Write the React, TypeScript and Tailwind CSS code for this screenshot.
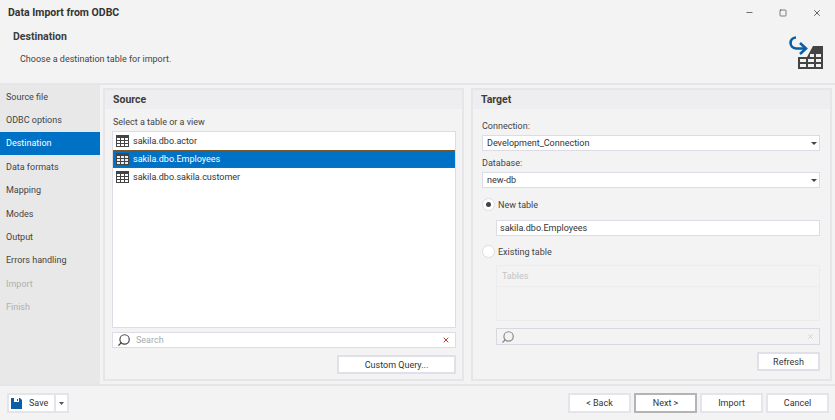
import { Search, X, Minus, Square } from "lucide-react";

const steps = [
  { label: "Source file" },
  { label: "ODBC options" },
  { label: "Destination", active: true },
  { label: "Data formats" },
  { label: "Mapping" },
  { label: "Modes" },
  { label: "Output" },
  { label: "Errors handling" },
  { label: "Import", disabled: true },
  { label: "Finish", disabled: true },
];

function TableIcon({ selected }: { selected?: boolean }) {
  return (
    <svg width="13" height="13" viewBox="0 0 13 13" className="shrink-0">
      <rect x="0.5" y="0.5" width="12" height="11" fill={selected ? "#e8eef4" : "#fff"} stroke="#444" />
      <rect x="0" y="0" width="13" height="3" fill="#444" />
      <path d="M4.5 3v8M8.5 3v8M1 5.5h11M1 8.5h11" stroke="#444" strokeWidth="1" />
    </svg>
  );
}

function Combo({ value }: { value: string }) {
  return (
    <div className="flex h-[16px] items-center justify-between border border-[#dcdce6] bg-white pl-[4px] pr-[1px] text-[#333]">
      <span>{value}</span>
      <svg width="6" height="3" viewBox="0 0 6 3" className="mr-[1px]">
        <path d="M0 0h6L3 3z" fill="#444" />
      </svg>
    </div>
  );
}

function Panel({ title, children }: { title: string; children: React.ReactNode }) {
  return (
    <section className="flex w-[361px] shrink-0 flex-col border-2 border-[#e6e6ea] bg-[#f3f3f3]">
      <h2 className="flex h-[19px] shrink-0 items-center bg-[#eeeef0] pl-[8px] text-[10.5px] font-bold text-[#3c3c3c]">{title}</h2>
      {children}
    </section>
  );
}

function Btn({ label, className = "" }: { label: string; className?: string }) {
  return (
    <button
      type="button"
      className={`flex items-center justify-center border-2 bg-white text-[#333] ${className}`}
    >
      {label}
    </button>
  );
}

export default function App() {
  return (
    <div
      className="flex h-[420px] w-[835px] flex-col overflow-hidden bg-[#f3f3f3] text-[9px] leading-[10px] text-[#444]"
      style={{ fontFamily: 'Roboto, "Liberation Sans", sans-serif' }}
    >
      <header className="relative h-[83px] shrink-0">
        <div className="flex h-[25px] items-center justify-between pl-[8px] pr-[13px]">
          <span className="text-[10.5px] font-bold text-[#333]">Data Import from ODBC</span>
          <div className="flex items-center gap-[25px] text-[#444]">
            <Minus size={9} strokeWidth={2} />
            <Square size={8} strokeWidth={2} />
            <X size={10} strokeWidth={2} />
          </div>
        </div>
        <div className="pl-[13px] pt-[7px] text-[10.5px] font-bold text-[#3c3c3c]">Destination</div>
        <div className="pl-[20px] pt-[12px] text-[#444]">Choose a destination table for import.</div>
        <svg width="36" height="36" viewBox="0 0 36 36" className="absolute right-[11px] top-[35px]">
          <path d="M8 2.5 C0.5 3 1 13 8 13.5 L17 13.5" fill="none" stroke="#0a5ea8" strokeWidth="2.6" />
          <path d="M12 8 L18 13.5 L12 19" fill="none" stroke="#0a5ea8" strokeWidth="2.6" />
          <path d="M10 34 V22 H19 L25 11 H35 V34 Z" fill="#444" />
          <g fill="#f2f2f2">
            <rect x="12" y="24" width="6" height="3" />
            <rect x="20" y="24" width="6" height="3" />
            <rect x="28" y="24" width="5" height="3" />
            <rect x="12" y="29" width="6" height="3" />
            <rect x="20" y="29" width="6" height="3" />
            <rect x="28" y="29" width="5" height="3" />
            <rect x="22" y="19" width="4" height="3" />
            <rect x="28" y="19" width="5" height="3" />
          </g>
        </svg>
      </header>

      <div className="flex min-h-0 flex-1 border-y-2 border-[#e6e6ea]">
        <nav className="w-[100px] shrink-0 bg-[#e8e8e8]">
          {steps.map((s) => (
            <div
              key={s.label}
              className={`flex h-[23.4px] items-center pl-[6px] ${
                s.active ? "bg-[#0072c6] text-white" : s.disabled ? "text-[#b0b0b0]" : "text-[#444]"
              }`}
            >
              {s.label}
            </div>
          ))}
        </nav>

        <main className="flex min-w-0 flex-1 gap-[7px] pb-[3px] pl-[3px] pr-[3px] pt-[3px]">
          <Panel title="Source">
            <div className="flex flex-1 flex-col pl-[7px] pr-[6px]">
              <label className="pb-[4px] pl-[1px] pt-[8px]">Select a table or a view</label>
              <ul className="h-[197px] border border-[#dcdce6] bg-white text-[#333]">
                <li className="flex h-[18px] items-center gap-[4px] pl-[3px]">
                  <TableIcon />
                  sakila.dbo.actor
                </li>
                <li className="flex h-[18px] items-center gap-[4px] bg-[#0072c6] pl-[3px] text-white outline-1 -outline-offset-1 outline-dotted outline-[#7a5a30]">
                  <TableIcon selected />
                  sakila.dbo.Employees
                </li>
                <li className="flex h-[18px] items-center gap-[4px] pl-[3px]">
                  <TableIcon />
                  sakila.dbo.sakila.customer
                </li>
              </ul>
              <div className="mt-[4px] flex h-[16px] items-center justify-between border border-[#dcdce6] bg-white pl-[4px] pr-[5px]">
                <div className="flex items-center gap-[5px] text-[#aaa]">
                  <Search size={14} strokeWidth={2} className="-scale-x-100 text-[#444]" />
                  Search
                </div>
                <X size={8} strokeWidth={3} className="text-[#b5402a]" />
              </div>
              <div className="mt-[7px] flex justify-end">
                <Btn label="Custom Query..." className="h-[19px] w-[119px] border-[#e0e0ea]" />
              </div>
            </div>
          </Panel>

          <Panel title="Target">
            <div className="flex flex-1 flex-col pl-[9px] pr-[10px]">
              <label className="pb-[4px] pt-[12px]">Connection:</label>
              <Combo value="Development_Connection" />
              <label className="pb-[4px] pt-[7px]">Database:</label>
              <Combo value="new-db" />
              <div className="mt-[10px] flex items-center gap-[3px]">
                <span className="flex h-[13px] w-[13px] items-center justify-center rounded-full border border-[#dcdce6] bg-white">
                  <span className="h-[5px] w-[5px] rounded-full bg-[#444]" />
                </span>
                New table
              </div>
              <div className="ml-[14px] mt-[9px] flex h-[16px] items-center border border-[#dcdce6] bg-white pl-[3px] text-[#333]">
                sakila.dbo.Employees
              </div>
              <div className="mt-[9px] flex items-center gap-[3px]">
                <span className="h-[13px] w-[13px] rounded-full border border-[#dcdce6] bg-white" />
                Existing table
              </div>
              <div className="ml-[14px] mt-[7px] h-[56px] border border-[#ececee]">
                <div className="flex h-[21px] items-center border-b border-[#ececee] pl-[5px] text-[#c4c4c4]">Tables</div>
              </div>
              <div className="ml-[14px] mt-[7px] flex h-[17px] items-center justify-between border border-[#d8d8e2] bg-[#f3f3f3] pl-[4px] pr-[5px]">
                <Search size={14} strokeWidth={2} className="-scale-x-100 text-[#888]" />
                <X size={7} strokeWidth={3} className="text-[#ccc]" />
              </div>
              <div className="mt-[7px] flex justify-end">
                <Btn label="Refresh" className="h-[19px] w-[63px] border-[#e0e0ea]" />
              </div>
            </div>
          </Panel>
        </main>
      </div>

      <footer className="flex h-[34px] shrink-0 items-center justify-between pl-[7px] pr-[6px]">
        <div className="flex h-[20px] text-[#333]">
          <button type="button" className="flex w-[47px] items-center gap-[7px] border-2 border-r-0 border-[#e4e4ea] bg-white pl-[2px]">
            <svg width="11" height="11" viewBox="0 0 11 11">
              <path d="M0 0h9l2 2v9H0z" fill="#0a5ea8" />
              <rect x="3" y="0" width="5" height="4" fill="#fff" />
              <rect x="6" y="1" width="1" height="2" fill="#0a5ea8" />
            </svg>
            Save
          </button>
          <button type="button" className="flex w-[15px] items-center justify-center border-2 border-[#e4e4ea] bg-white">
            <svg width="5" height="3" viewBox="0 0 5 3"><path d="M0 0h5L2.5 3z" fill="#555" /></svg>
          </button>
        </div>
        <div className="flex gap-[3px]">
          <Btn label="< Back" className="h-[20px] w-[63px] border-[#e4e4ea]" />
          <Btn label="Next >" className="h-[20px] w-[63px] border-[#b4b4b4]" />
          <Btn label="Import" className="h-[20px] w-[63px] border-[#e4e4ea]" />
          <Btn label="Cancel" className="h-[20px] w-[63px] border-[#e4e4ea]" />
        </div>
      </footer>
    </div>
  );
}
